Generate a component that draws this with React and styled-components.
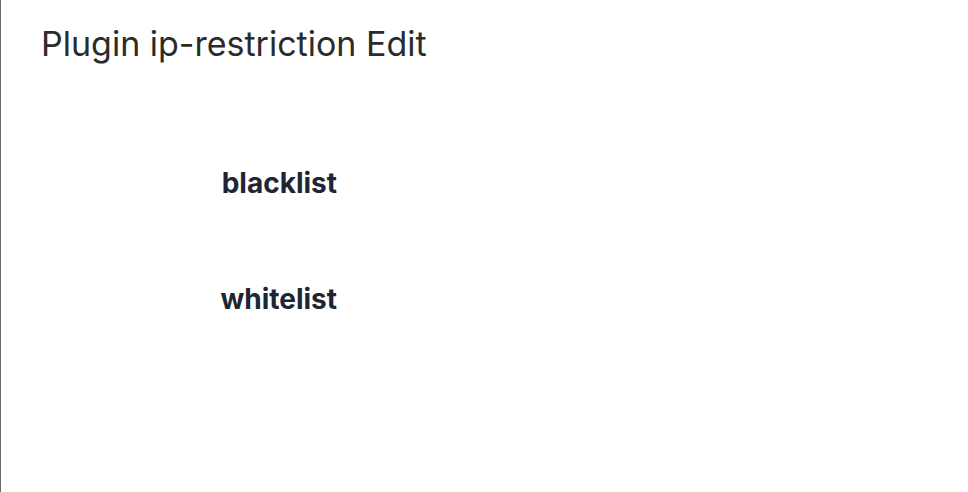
import React from "react";
import styled, { createGlobalStyle } from "styled-components";

const GlobalStyle = createGlobalStyle`
  html, body {
    margin: 0;
    padding: 0;
    background: #ffffff;
  }
  body {
    font-family: Inter, "Noto Sans", sans-serif;
  }
`;

const Drawer = styled.div`
  box-sizing: border-box;
  width: 968px;
  height: 492px;
  border-left: 1px solid #6b6b6b;
  background: #ffffff;
  display: flex;
  flex-direction: column;
`;

const Header = styled.h2`
  margin: 0;
  padding: 22px 0 0 40px;
  font-size: 34px;
  font-weight: 400;
  line-height: 44px;
  color: #2b2b2b;
`;

const Form = styled.div`
  display: flex;
  flex-direction: column;
  gap: 84px;
  padding-top: 101px;
`;

const Row = styled.div`
  display: grid;
  grid-template-columns: 336px 1fr;
  align-items: center;
`;

const Label = styled.label`
  text-align: right;
  font-size: 28px;
  font-weight: 700;
  line-height: 32px;
  color: #1e2533;
`;

const fields = ["blacklist", "whitelist"];

export default function App() {
  return (
    <>
      <GlobalStyle />
      <Drawer>
        <Header>Plugin ip-restriction Edit</Header>
        <Form>
          {fields.map((f) => (
            <Row key={f}>
              <Label>{f}</Label>
              <div />
            </Row>
          ))}
        </Form>
      </Drawer>
    </>
  );
}
